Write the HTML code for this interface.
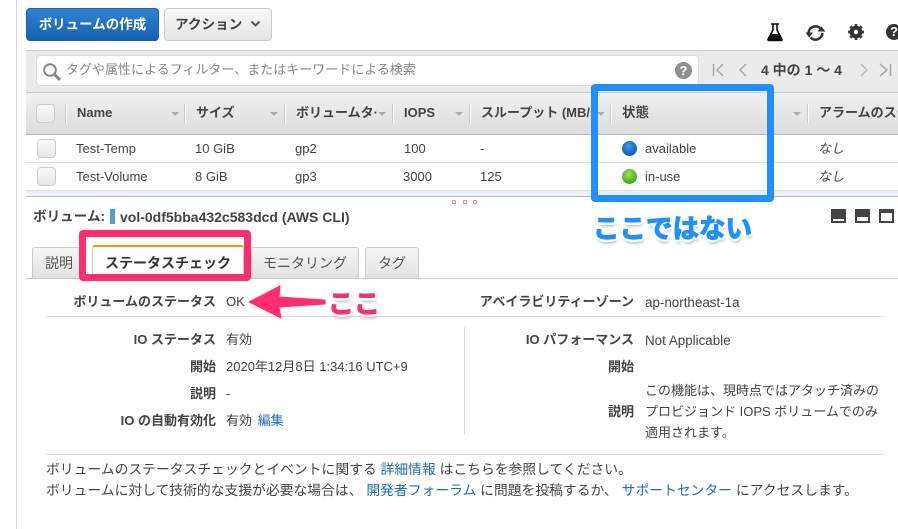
<!DOCTYPE html>
<html lang="ja"><head><meta charset="utf-8"><title>Volumes</title>
<style>
*{box-sizing:border-box}
html,body{margin:0;padding:0;background:#fff}
body{width:898px;height:529px;position:relative;overflow:hidden;font-family:"Liberation Sans","Noto Sans CJK JP",sans-serif;font-size:13px;color:#444}
.a{position:absolute;white-space:nowrap}
.b{font-weight:bold}
.r{position:absolute;white-space:nowrap;text-align:right;font-weight:bold;color:#444;font-size:13px}
a{color:#1f6fb5;text-decoration:none}
.hs{position:absolute;top:104px;width:2px;height:19px;background:#fafafa;border-left:1px solid #ccc}
.ar{position:absolute;top:112px;width:0;height:0;border-left:4px solid transparent;border-right:4px solid transparent;border-top:4px solid #aaa}
.th{position:absolute;top:104px;font-weight:bold;color:#444;white-space:nowrap;line-height:18px;font-size:13px}
.cb{position:absolute;width:19px;height:19px;border:1px solid #ccc;border-radius:4px;background:linear-gradient(#fafafa,#e8e8e8)}
.td{position:absolute;white-space:nowrap;line-height:16px;color:#444;font-size:13px}
.tab{position:absolute;top:247px;height:31px;border:1px solid #ccc;border-bottom:none;border-radius:3px 3px 0 0;background:linear-gradient(#f6f6f6,#e2e2e2);text-align:center;line-height:30px;color:#555;font-size:14px}
.hl{position:absolute;height:1px;background:#ddd}
.sn{position:absolute;width:15px;height:14px;background:#444;top:209px}
.sw{position:absolute;background:#fff}
.ann{position:absolute;white-space:nowrap;font-weight:bold;-webkit-text-stroke:1.1px currentColor;text-shadow:-3px 0 #fff,3px 0 #fff,0 -3px #fff,0 3px #fff,-2px -2px #fff,2px 2px #fff,-2px 2px #fff,2px -2px #fff,1px 4px 3px rgba(0,0,0,.35)}
</style></head><body>
<div style="position:absolute;left:16px;top:0;width:1px;height:529px;background:#d5dbdb"></div>

<div class="a b" style="left:26px;top:8px;width:133px;height:33px;border:1px solid #1a62ab;border-radius:4px;background:linear-gradient(#2f84d4,#175fb0);color:#fff;text-align:center;line-height:31px;font-size:13.5px">ボリュームの作成</div>
<div class="a b" style="left:164px;top:8px;width:108px;height:33px;border:1px solid #ccc;border-radius:4px;background:linear-gradient(#f8f8f8,#e4e4e4);color:#444;line-height:31px;font-size:13.6px;padding-left:10px">アクション</div>
<svg class="a" style="left:250px;top:20px" width="11" height="8" viewBox="0 0 11 8"><path d="M1.5 1.5L5.5 5.5L9.5 1.5" fill="none" stroke="#555" stroke-width="2"/></svg>

<svg class="a" style="left:767px;top:23px" width="16" height="19" viewBox="0 0 16 19"><path d="M4 1H12M6 1V7L1 16.5Q1 17.5 2 17.5H14Q15 17.5 15 16.5L10 7V1" fill="none" stroke="#111" stroke-width="1.6"/><path d="M4.5 11H11.5L15 17.5H1Z" fill="#111"/></svg>
<svg class="a" style="left:805px;top:23px" width="21" height="20" viewBox="0 0 21 20"><path d="M3.5 10A7 7 0 0 1 15.5 5.5M17.5 10A7 7 0 0 1 5.5 14.5" fill="none" stroke="#333" stroke-width="2.6"/><path d="M12.5 8.5H20.5L16.5 3.5Z M0.5 9.5H8L4 14.5Z" fill="#333"/></svg>
<svg class="a" style="left:848px;top:24px" width="16" height="16" viewBox="0 0 16 16"><circle cx="8" cy="8" r="4.6" fill="none" stroke="#333" stroke-width="3.4"/><path d="M8 0V16M0 8H16M2.3 2.3L13.7 13.7M13.7 2.3L2.3 13.7" stroke="#333" stroke-width="2.6"/><circle cx="8" cy="8" r="2.2" fill="#fff"/></svg>
<div class="a" style="left:886px;top:24px;width:16px;height:16px;border-radius:50%;background:#333;color:#fff;font-weight:bold;font-size:13px;line-height:16px;text-align:center">?</div>

<div class="a" style="left:26px;top:50px;width:872px;height:43px;background:#ebebeb;border-top:1px solid #ccc;border-bottom:1px solid #ccc"></div>
<div class="a" style="left:36px;top:55px;width:663px;height:31px;background:#fff;border:1px solid #ddd;border-radius:4px"></div>
<svg class="a" style="left:42px;top:62px" width="20" height="20" viewBox="0 0 20 20"><circle cx="8" cy="8" r="5.8" fill="none" stroke="#888" stroke-width="2"/><path d="M12.5 12.5L18 18" stroke="#888" stroke-width="3"/></svg>
<div class="a" style="left:66px;top:62px;color:#888;font-size:13px;line-height:16px">タグや属性によるフィルター、またはキーワードによる検索</div>
<div class="a" style="left:675px;top:62px;width:17px;height:17px;border-radius:50%;background:#8f8f8f;color:#fff;font-weight:bold;font-size:13px;line-height:17px;text-align:center">?</div>
<svg class="a" style="left:712px;top:62px" width="18" height="16" viewBox="0 0 18 16"><path d="M1.5 2V14M11 2L5 8L11 14" fill="none" stroke="#aaa" stroke-width="1.5"/></svg>
<svg class="a" style="left:737px;top:62px" width="12" height="16" viewBox="0 0 12 16"><path d="M9 2L3 8L9 14" fill="none" stroke="#aaa" stroke-width="1.5"/></svg>
<div class="a b" style="left:761px;top:62px;color:#444;font-size:14px;line-height:16px">4 中の 1 〜 4</div>
<svg class="a" style="left:858px;top:62px" width="12" height="16" viewBox="0 0 12 16"><path d="M3 2L9 8L3 14" fill="none" stroke="#bbb" stroke-width="1.5"/></svg>
<svg class="a" style="left:878px;top:62px" width="18" height="16" viewBox="0 0 18 16"><path d="M2 2L9 8L2 14M12.5 2V14" fill="none" stroke="#aaa" stroke-width="1.5"/></svg>

<div class="a" style="left:26px;top:93px;width:872px;height:42px;background:linear-gradient(#f1f1f1,#dcdcdc);border-bottom:1px solid #bbb"></div>
<div class="cb" style="left:36px;top:104px"></div>
<div class="hs" style="left:65px"></div>
<div class="th" style="left:77px">Name</div><div class="ar" style="left:171px"></div><div class="hs" style="left:184px"></div>
<div class="th" style="left:196px">サイズ</div><div class="ar" style="left:270px"></div><div class="hs" style="left:284px"></div>
<div class="th" style="left:296px;width:81px;overflow:hidden">ボリュームタ·</div><div class="ar" style="left:378px"></div><div class="hs" style="left:392px"></div>
<div class="th" style="left:404px">IOPS</div><div class="ar" style="left:455px"></div><div class="hs" style="left:469px"></div>
<div class="th" style="left:481px;width:112px;overflow:hidden">スループット (MB/s)</div><div class="ar" style="left:597px"></div><div class="hs" style="left:610px"></div>
<div class="th" style="left:622px;font-size:13.5px">状態</div><div class="ar" style="left:793px"></div><div class="hs" style="left:807px"></div>
<div class="th" style="left:819px;width:79px;overflow:hidden">アラームのステータス</div>

<div class="hl" style="left:26px;top:162px;width:872px"></div>
<div class="hl" style="left:26px;top:190px;width:872px"></div>
<div class="a" style="left:26px;top:191px;width:872px;height:6px;background:#e9f1fb;border-bottom:1px solid #bbb"></div>
<div class="cb" style="left:37px;top:139px"></div>
<div class="cb" style="left:37px;top:167px"></div>
<div class="td" style="left:76px;top:141px">Test-Temp</div><div class="td" style="left:195px;top:141px">10 GiB</div><div class="td" style="left:295px;top:141px">gp2</div><div class="td" style="left:404px;top:141px">100</div><div class="td" style="left:480px;top:141px">-</div>
<div class="td" style="left:645px;top:141px">available</div><i class="a" style="left:622px;top:141px;width:15px;height:15px;border-radius:50%;background:radial-gradient(circle at 45% 35%,#3f9be8,#0b5cb5 75%)"></i><div class="td" style="left:819px;top:141px;transform:skewX(-12deg)">なし</div>
<div class="td" style="left:76px;top:169px">Test-Volume</div><div class="td" style="left:195px;top:169px">8 GiB</div><div class="td" style="left:295px;top:169px">gp3</div><div class="td" style="left:403px;top:169px">3000</div><div class="td" style="left:480px;top:169px">125</div>
<div class="td" style="left:645px;top:169px">in-use</div><i class="a" style="left:622px;top:169px;width:15px;height:15px;border-radius:50%;background:radial-gradient(circle at 45% 35%,#9be85a,#3fa512 75%)"></i><div class="td" style="left:819px;top:169px;transform:skewX(-12deg)">なし</div>

<div class="a" style="left:452px;top:200px;width:4px;height:4px;border:1px solid #aaa;border-radius:1px"></div>
<div class="a" style="left:463px;top:200px;width:4px;height:4px;border:1px solid #aaa;border-radius:1px"></div>
<div class="a" style="left:473px;top:200px;width:4px;height:4px;border:1px solid #aaa;border-radius:1px"></div>

<div class="a b" style="left:33px;top:208px;font-size:13.6px;line-height:18px;color:#444">ボリューム:</div>
<div class="a" style="left:110px;top:209px;width:5px;height:15px;background:#5b9bd5"></div>
<div class="a b" style="left:120px;top:208px;font-size:14px;line-height:18px;color:#444">vol-0df5bba432c583dcd (AWS CLI)</div>
<div class="sn" style="left:831px"></div><div class="sw" style="left:833px;top:219px;width:11px;height:2px"></div>
<div class="sn" style="left:855px"></div><div class="sw" style="left:857px;top:217px;width:11px;height:4px"></div>
<div class="sn" style="left:879px"></div><div class="sw" style="left:881px;top:213px;width:11px;height:8px"></div>

<div class="tab" style="left:32px;width:54px">説明</div>
<div class="tab" style="left:251px;width:108px">モニタリング</div>
<div class="tab" style="left:365px;width:54px">タグ</div>
<div class="a" style="left:26px;top:278px;width:872px;height:1px;background:#ccc"></div>
<div class="a b" style="left:92px;top:245px;width:152px;height:34px;background:#fff;border:1px solid #ccc;border-top:2px solid #f39800;border-bottom:none;border-radius:3px 3px 0 0;text-align:center;line-height:33px;font-size:14px;color:#333">ステータスチェック</div>

<div class="r" style="left:46px;width:170px;top:293px;line-height:18px">ボリュームのステータス</div>
<div class="td" style="left:226px;top:294px">OK</div>
<div class="r" style="left:450px;width:184px;top:293px;line-height:18px">アベイラビリティーゾーン</div>
<div class="td" style="left:645px;top:295px;font-size:13.4px">ap-northeast-1a</div>
<div class="hl" style="left:46px;top:316px;width:838px"></div>
<div class="a" style="left:464px;top:327px;width:1px;height:108px;background:#ddd"></div>

<div class="r" style="left:46px;width:170px;top:331px;line-height:18px">IO ステータス</div>
<div class="td" style="left:226px;top:332px">有効</div>
<div class="r" style="left:46px;width:170px;top:358px;line-height:18px">開始</div>
<div class="td" style="left:226px;top:359px">2020年12月8日 1:34:16 UTC+9</div>
<div class="r" style="left:46px;width:170px;top:385px;line-height:18px">説明</div>
<div class="td" style="left:226px;top:386px">-</div>
<div class="r" style="left:46px;width:170px;top:412px;line-height:18px">IO の自動有効化</div>
<div class="td" style="left:226px;top:413px">有効 <a style="margin-left:2px">編集</a></div>

<div class="r" style="left:450px;width:184px;top:331px;line-height:18px">IO パフォーマンス</div>
<div class="td" style="left:645px;top:333px;font-size:13.4px">Not Applicable</div>
<div class="r" style="left:450px;width:184px;top:358px;line-height:18px">開始</div>
<div class="td" style="left:645px;top:383px">この機能は、現時点ではアタッチ済みの</div>
<div class="r" style="left:450px;width:184px;top:403px;line-height:18px">説明</div>
<div class="td" style="left:645px;top:404px">プロビジョンド IOPS ボリュームでのみ</div>
<div class="td" style="left:645px;top:425px">適用されます。</div>

<div class="hl" style="left:46px;top:454px;width:838px"></div>
<div class="td" style="left:46px;top:462px;font-size:13.8px">ボリュームのステータスチェックとイベントに関する <a>詳細情報</a> はこちらを参照してください。</div>
<div class="td" style="left:46px;top:483px;font-size:13.8px">ボリュームに対して技術的な支援が必要な場合は、 <a>開発者フォーラム</a> に問題を投稿するか、 <a>サポートセンター</a> にアクセスします。</div>

<div class="a" style="left:591px;top:84px;width:183px;height:118px;border:7px solid #1e90ff;border-radius:4px"></div>
<div class="a" style="left:79px;top:230px;width:172px;height:51px;border:7px solid #ff2d6f;border-radius:4px"></div>
<svg class="a" style="left:0;top:0" width="898" height="529" viewBox="0 0 898 529"><path d="M249 302L280 286L279 297L325 300V304L279 307L281 318Z" fill="#ff2d6f" stroke="#ff2d6f" stroke-linejoin="round"/></svg>
<div class="ann" style="left:328px;top:289px;font-size:26px;line-height:30px;color:#ff2d6f">ここ</div>
<div class="ann" style="left:593px;top:213px;font-size:26.5px;line-height:32px;color:#1e90ff">ここではない</div>
</body></html>
